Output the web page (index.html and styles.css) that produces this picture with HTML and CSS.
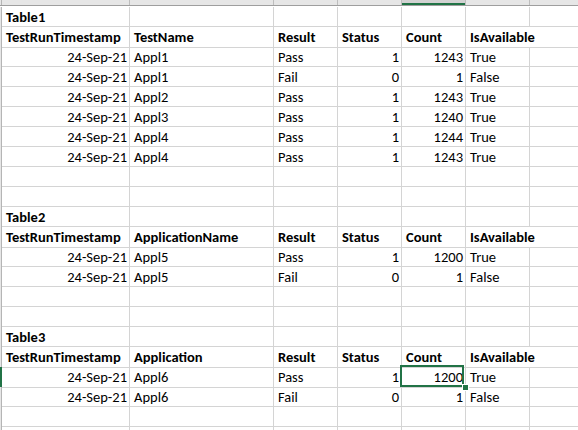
FILE: index.html
```html
<!DOCTYPE html>
<html>
<head>
<meta charset="utf-8">
<link rel="stylesheet" href="styles.css">
</head>
<body>
<div class="sheet">
  <div class="row colhead">
    <div class="rh"></div>
    <div class="ch">A</div><div class="ch">B</div><div class="ch">C</div><div class="ch">D</div><div class="ch sel">E</div><div class="ch">F</div><div class="ch">G</div>
  </div>
  <div class="body">
    <div class="row"><div class="rh"></div><div class="c b">Table1</div><div class="c"></div><div class="c"></div><div class="c"></div><div class="c"></div><div class="c"></div><div class="c"></div></div>
    <div class="row"><div class="rh"></div><div class="c b">TestRunTimestamp</div><div class="c b">TestName</div><div class="c b">Result</div><div class="c b">Status</div><div class="c b">Count</div><div class="c b spill">IsAvailable</div><div class="c"></div></div>
    <div class="row"><div class="rh"></div><div class="c r">24-Sep-21</div><div class="c">Appl1</div><div class="c">Pass</div><div class="c r">1</div><div class="c r">1243</div><div class="c">True</div><div class="c"></div></div>
    <div class="row"><div class="rh"></div><div class="c r">24-Sep-21</div><div class="c">Appl1</div><div class="c">Fail</div><div class="c r">0</div><div class="c r">1</div><div class="c">False</div><div class="c"></div></div>
    <div class="row"><div class="rh"></div><div class="c r">24-Sep-21</div><div class="c">Appl2</div><div class="c">Pass</div><div class="c r">1</div><div class="c r">1243</div><div class="c">True</div><div class="c"></div></div>
    <div class="row"><div class="rh"></div><div class="c r">24-Sep-21</div><div class="c">Appl3</div><div class="c">Pass</div><div class="c r">1</div><div class="c r">1240</div><div class="c">True</div><div class="c"></div></div>
    <div class="row"><div class="rh"></div><div class="c r">24-Sep-21</div><div class="c">Appl4</div><div class="c">Pass</div><div class="c r">1</div><div class="c r">1244</div><div class="c">True</div><div class="c"></div></div>
    <div class="row"><div class="rh"></div><div class="c r">24-Sep-21</div><div class="c">Appl4</div><div class="c">Pass</div><div class="c r">1</div><div class="c r">1243</div><div class="c">True</div><div class="c"></div></div>
    <div class="row"><div class="rh"></div><div class="c"></div><div class="c"></div><div class="c"></div><div class="c"></div><div class="c"></div><div class="c"></div><div class="c"></div></div>
    <div class="row"><div class="rh"></div><div class="c"></div><div class="c"></div><div class="c"></div><div class="c"></div><div class="c"></div><div class="c"></div><div class="c"></div></div>
    <div class="row"><div class="rh"></div><div class="c b">Table2</div><div class="c"></div><div class="c"></div><div class="c"></div><div class="c"></div><div class="c"></div><div class="c"></div></div>
    <div class="row"><div class="rh"></div><div class="c b">TestRunTimestamp</div><div class="c b">ApplicationName</div><div class="c b">Result</div><div class="c b">Status</div><div class="c b">Count</div><div class="c b spill">IsAvailable</div><div class="c"></div></div>
    <div class="row"><div class="rh"></div><div class="c r">24-Sep-21</div><div class="c">Appl5</div><div class="c">Pass</div><div class="c r">1</div><div class="c r">1200</div><div class="c">True</div><div class="c"></div></div>
    <div class="row"><div class="rh"></div><div class="c r">24-Sep-21</div><div class="c">Appl5</div><div class="c">Fail</div><div class="c r">0</div><div class="c r">1</div><div class="c">False</div><div class="c"></div></div>
    <div class="row"><div class="rh"></div><div class="c"></div><div class="c"></div><div class="c"></div><div class="c"></div><div class="c"></div><div class="c"></div><div class="c"></div></div>
    <div class="row"><div class="rh"></div><div class="c"></div><div class="c"></div><div class="c"></div><div class="c"></div><div class="c"></div><div class="c"></div><div class="c"></div></div>
    <div class="row"><div class="rh"></div><div class="c b">Table3</div><div class="c"></div><div class="c"></div><div class="c"></div><div class="c"></div><div class="c"></div><div class="c"></div></div>
    <div class="row"><div class="rh"></div><div class="c b">TestRunTimestamp</div><div class="c b">Application</div><div class="c b">Result</div><div class="c b">Status</div><div class="c b">Count</div><div class="c b spill">IsAvailable</div><div class="c"></div></div>
    <div class="row"><div class="rh on"></div><div class="c r">24-Sep-21</div><div class="c">Appl6</div><div class="c">Pass</div><div class="c r">1</div><div class="c r active">1200<span class="selbox"></span><span class="handle"></span></div><div class="c">True</div><div class="c"></div></div>
    <div class="row"><div class="rh"></div><div class="c r">24-Sep-21</div><div class="c">Appl6</div><div class="c">Fail</div><div class="c r">0</div><div class="c r">1</div><div class="c">False</div><div class="c"></div></div>
    <div class="row"><div class="rh"></div><div class="c"></div><div class="c"></div><div class="c"></div><div class="c"></div><div class="c"></div><div class="c"></div><div class="c"></div></div>
    <div class="row"><div class="rh"></div><div class="c"></div><div class="c"></div><div class="c"></div><div class="c"></div><div class="c"></div><div class="c"></div><div class="c"></div></div>
  </div>
</div>
</body>
</html>
```
FILE: styles.css
```css
html, body {
  margin: 0;
  padding: 0;
  background: #fff;
  overflow: hidden;
}
.sheet {
  width: 578px;
  height: 430px;
  overflow: hidden;
  font-family: "Carlito", "Lato", sans-serif;
  font-size: 14.5px;
  color: #000;
}
.row {
  display: grid;
  grid-template-columns: 2px 128px 144px 64px 64px 64px 64px 64px;
  height: 20px;
}
.colhead {
  margin-top: -14px;
  background: #e6e6e6;
  border-bottom: 1px solid #9e9e9e;
  box-sizing: border-box;
}
.ch {
  border-right: 1px solid #bdbdbd;
  text-align: center;
  line-height: 19px;
  color: #444;
}
.ch.sel {
  background: #d2d2d2;
  color: #217346;
  box-shadow: inset 0 -2px 0 #217346;
}
.body {
  padding-top: 1px;
}
.rh {
  background: #b5b5b5;
  box-shadow: inset 1px 0 0 #e6e6e6;
}
.rh.on {
  background: #217346;
  box-shadow: none;
}
.c {
  box-sizing: border-box;
  border-right: 1px solid #d4d4d4;
  border-bottom: 1px solid #d4d4d4;
  padding: 0 3px 0 4px;
  line-height: 20px;
  white-space: nowrap;
  overflow: hidden;
  position: relative;
}
.b { font-weight: bold; }
.r { text-align: right; padding-right: 2px; }
.spill {
  overflow: visible;
  border-right-color: transparent;
  z-index: 1;
}
.active { overflow: visible; }
.selbox {
  position: absolute;
  left: -2px;
  top: -2px;
  width: 64px;
  height: 22px;
  box-sizing: border-box;
  border: 2px solid #217346;
}
.handle {
  position: absolute;
  right: -4px;
  bottom: -4px;
  width: 5px;
  height: 5px;
  background: #217346;
  border: 1px solid #fff;
  z-index: 2;
}
```
